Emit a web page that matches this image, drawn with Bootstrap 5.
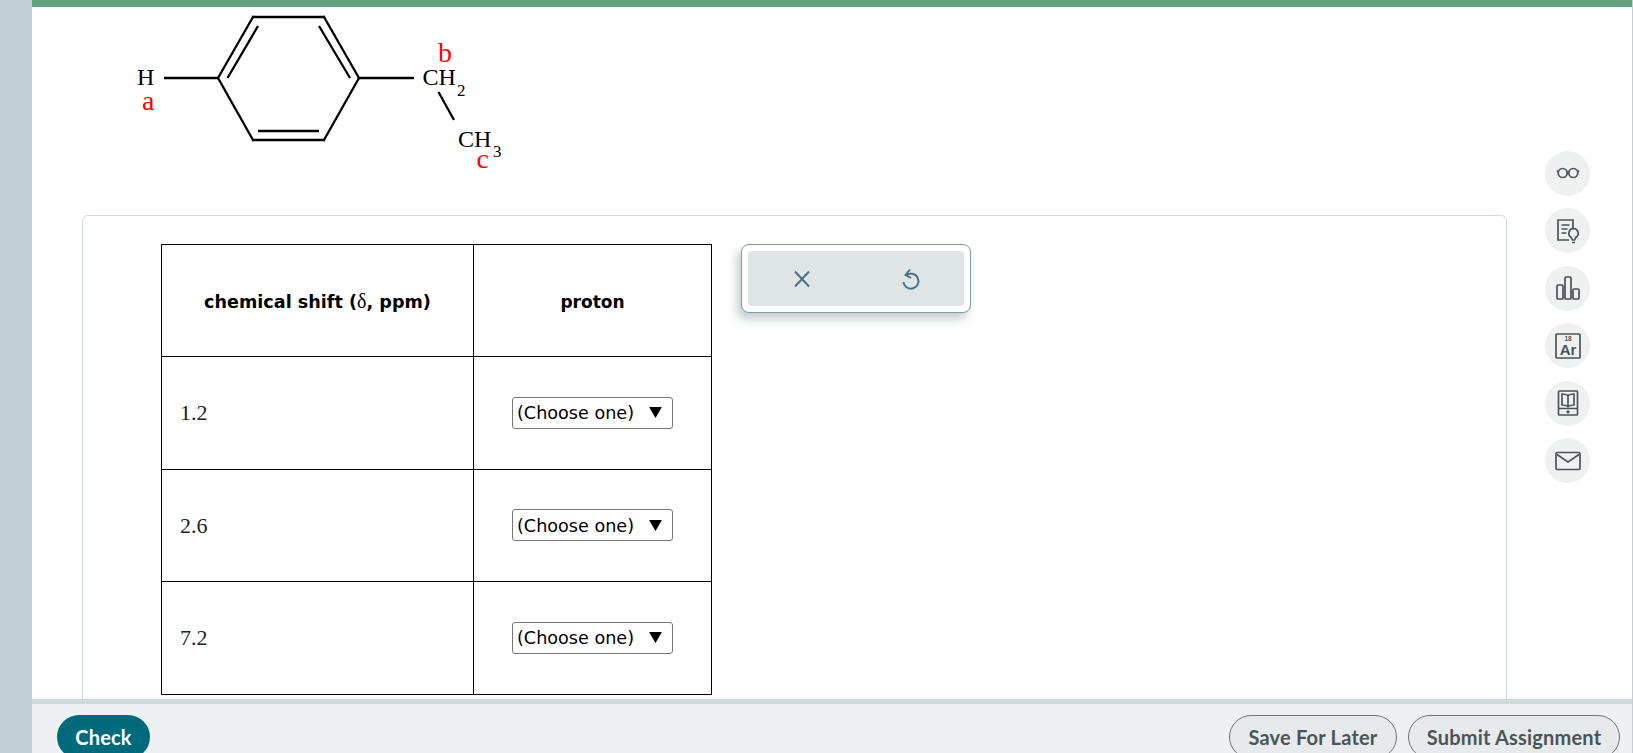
<!DOCTYPE html>
<html lang="en">
<head>
    <meta charset="UTF-8">
    <meta name="viewport" content="width=device-width, initial-scale=1.0">
    <title>Assignment question</title>
    <link href="https://cdn.jsdelivr.net/npm/bootstrap@5.3.0/dist/css/bootstrap.min.css" rel="stylesheet">
    <style>
        body { background: #fff; font-family: "DejaVu Sans", sans-serif; }
        .side-rail { width: 32px; background: #c1ced3; flex-shrink: 0; }
        .main-col { min-width: 0; border-right: 1px solid #c1ced3; }
        .top-strip { height: 7px; background: #5fa27d; flex-shrink: 0; }
        .question-col { width: 1425px; margin-left: 50px; flex-shrink: 0; }
        .molecule { display: block; width: 500px; height: 208px; }
        .molecule text { font-family: "Liberation Serif", serif; font-size: 24px; fill: #000; }
        .molecule .lbl { fill: #f00; font-size: 28px; }
        .molecule .sub { font-size: 17px; }
        .molecule line { stroke: #000; stroke-width: 2.3; stroke-linecap: square; }
        .molecule line.bond { stroke-linecap: butt; }
        .answer-card { min-height: 500px; border: 1px solid #d0dade; border-radius: 6px; padding: 28px 0 0 78px; gap: 29px; }
        .shift-table { width: 551px; margin: 0; --bs-border-color: #000; border-color: #000; flex-shrink: 0; table-layout: fixed; }
        .shift-table th, .shift-table td { height: 112.5px; vertical-align: middle; padding: 0 18px; }
        .shift-table th { height: 112px; padding-top: 2px; font-size: 17.6px; line-height: 24px; font-weight: 700; text-align: center; white-space: nowrap; color: #000; }
        .shift-table th.proton-head { font-size: 17px; }
        .shift-table td.num { font-family: "Liberation Serif", serif; font-size: 22px; color: #222; }
        .delta { font-family: "Liberation Serif", serif; font-weight: 400; font-size: 20px; line-height: 1; }
        .proton-select { width: 161px; height: 32px; padding: 3px 0 0 4px; font-size: 17.6px; line-height: 1; color: #000; border: 1px solid #767676; border-radius: 3px; background-size: 13px 11px; background-position: right 10px center; background-image: url("data:image/svg+xml,%3csvg xmlns='http://www.w3.org/2000/svg' viewBox='0 0 14 12'%3e%3cpath d='M0 0h14L7 12z'/%3e%3c/svg%3e"); }
        .tool-box { width: 230px; height: 69px; padding: 6px; border: 1px solid #7d9ea8; border-radius: 8px; background: #fff; box-shadow: -4px 6px 10px rgba(60, 90, 100, .3); flex-shrink: 0; }
        .tool-inner { background: #dfe5e7; border-radius: 4px; }
        .tool-btn { width: 108px; background: none; border: 0; padding: 0; }
        .tool-btn svg { width: 24px; height: 24px; fill: none; stroke: #46707f; stroke-width: 1.9; }
        .icon-col { margin-left: 38px; padding-top: 143.5px; gap: 12.5px; }
        .round-icon { width: 45px; height: 45px; border-radius: 50%; background: #eff1f1; }
        .round-icon svg { width: 28px; height: 28px; fill: none; stroke: #4a5456; stroke-width: 1.7; }
        .round-icon text { font-family: "Liberation Sans", sans-serif; font-weight: 700; fill: #4a5456; stroke: none; }
        .foot-bar { height: 54px; flex-shrink: 0; background: #eef1f2; border-top: 5px solid #d0dade; padding: 11px 12px 0 25px; overflow: hidden; }
        .foot-right { gap: 11px; }
        .pill { height: 44px; border-radius: 22px; font-family: "Lato", sans-serif; font-weight: 700; font-size: 20px; letter-spacing: .2px; flex-shrink: 0; padding: 0; }
        .pill-check { width: 93px; background: #006a7d; border: 0; color: #fff; }
        .pill-plain { background: #e6eaeb; border: 1px solid #6b7678; color: #4b5557; }
        .pill-save { width: 168px; }
        .pill-submit { width: 212px; }
    </style>
</head>
<body>
    <div class="d-flex vh-100 overflow-hidden">
        <div class="side-rail"></div>
        <div class="main-col d-flex flex-column flex-grow-1">
            <div class="top-strip"></div>
            <div class="d-flex flex-grow-1 overflow-hidden">
                <div class="question-col">
                    <svg class="molecule" viewBox="82 7 500 208">
                        <g>
                            <line x1="218" y1="78" x2="253" y2="17"/>
                            <line x1="253" y1="17" x2="324" y2="17"/>
                            <line x1="324" y1="17" x2="359" y2="78"/>
                            <line x1="359" y1="78" x2="324" y2="140"/>
                            <line x1="324" y1="140" x2="253" y2="140"/>
                            <line x1="253" y1="140" x2="218" y2="78"/>
                            <line class="bond" x1="227.5" y1="78" x2="258" y2="26"/>
                            <line class="bond" x1="319" y1="26" x2="350" y2="78"/>
                            <line class="bond" x1="258" y1="131" x2="319" y2="131"/>
                            <line class="bond" x1="164" y1="78" x2="218" y2="78"/>
                            <line class="bond" x1="359" y1="78" x2="414" y2="78"/>
                            <line class="bond" x1="438.5" y1="92" x2="454" y2="120"/>
                        </g>
                        <text x="137" y="85">H</text>
                        <text class="lbl" x="142" y="110">a</text>
                        <text class="lbl" x="438" y="62">b</text>
                        <text x="422.5" y="85">CH</text>
                        <text class="sub" x="457" y="96">2</text>
                        <text x="458" y="147">CH</text>
                        <text class="sub" x="493" y="157">3</text>
                        <text class="lbl" x="476.5" y="168">c</text>
                    </svg>
                    <div class="answer-card d-flex align-items-start">
                        <table class="table table-bordered shift-table">
                            <colgroup><col style="width: 312px"><col></colgroup>
                            <thead>
                                <tr>
                                    <th>chemical shift (<span class="delta">δ</span>, ppm)</th>
                                    <th class="proton-head">proton</th>
                                </tr>
                            </thead>
                            <tbody>
                                <tr>
                                    <td class="num">1.2</td>
                                    <td class="text-center"><select class="form-select proton-select d-inline-block"><option>(Choose one)</option><option>a</option><option>b</option><option>c</option></select></td>
                                </tr>
                                <tr>
                                    <td class="num">2.6</td>
                                    <td class="text-center"><select class="form-select proton-select d-inline-block"><option>(Choose one)</option><option>a</option><option>b</option><option>c</option></select></td>
                                </tr>
                                <tr>
                                    <td class="num">7.2</td>
                                    <td class="text-center"><select class="form-select proton-select d-inline-block"><option>(Choose one)</option><option>a</option><option>b</option><option>c</option></select></td>
                                </tr>
                            </tbody>
                        </table>
                        <div class="tool-box">
                            <div class="tool-inner d-flex h-100">
                                <button class="tool-btn d-flex align-items-center justify-content-center" aria-label="Clear">
                                    <svg viewBox="0 0 24 24"><path d="M5 4.500 19 19.500M19 4.500 5 19.500"/></svg>
                                </button>
                                <button class="tool-btn d-flex align-items-center justify-content-center" aria-label="Undo">
                                    <svg viewBox="0 0 24 24"><path d="M8 8.500A7.500 7.500 0 1 1 5.500 15M12 2.500 7.500 8l5.500 3"/></svg>
                                </button>
                            </div>
                        </div>
                    </div>
                </div>
                <div class="icon-col d-flex flex-column">
                    <div class="round-icon d-flex align-items-center justify-content-center">
                        <svg viewBox="0 0 28 28"><circle cx="8.700" cy="14" r="4.500"/><circle cx="19.300" cy="14" r="4.500"/><path d="M13 13c.7-.6 1.300-.6 2 0M4.300 13 3 11.500M23.700 13 25 11.500"/></svg>
                    </div>
                    <div class="round-icon d-flex align-items-center justify-content-center">
                        <svg viewBox="0 0 28 28"><path d="M15 23H4V3h15v8M7.500 8h8M7.500 12h6M7.500 16h5"/><path d="M19.500 11.500a4.800 4.800 0 0 1 2.500 8.800L20.500 23h-2L17 20.300a4.800 4.800 0 0 1 2.500-8.800zM18 25.500h3"/></svg>
                    </div>
                    <div class="round-icon d-flex align-items-center justify-content-center">
                        <svg viewBox="0 0 28 28"><rect x="3" y="11" width="6" height="14" rx="1"/><rect x="11" y="3" width="6" height="22" rx="1"/><rect x="19" y="15" width="6" height="10" rx="1"/></svg>
                    </div>
                    <div class="round-icon d-flex align-items-center justify-content-center">
                        <svg viewBox="0 0 28 28"><rect x="2" y="2" width="24" height="24" rx="1"/><text x="14" y="9" font-size="6.500" text-anchor="middle">18</text><text x="14" y="22.500" font-size="15" text-anchor="middle">Ar</text></svg>
                    </div>
                    <div class="round-icon d-flex align-items-center justify-content-center">
                        <svg viewBox="0 0 28 28"><rect x="4.500" y="2" width="19" height="24" rx="1"/><path d="M4.500 19.500h19M14 6.500c-2-1.200-4-1.500-6-1.500v11c2 0 4 .3 6 1.500 2-1.200 4-1.500 6-1.500V5c-2 0-4 .3-6 1.500zM14 6.500v11"/><circle cx="14" cy="22.800" r=".8"/></svg>
                    </div>
                    <div class="round-icon d-flex align-items-center justify-content-center">
                        <svg viewBox="0 0 28 28"><rect x="2" y="5.500" width="24" height="17" rx="1.500"/><path d="M3 7.500l11 7.500 11-7.500"/></svg>
                    </div>
                </div>
            </div>
            <div class="foot-bar d-flex justify-content-between">
                <button class="pill pill-check">Check</button>
                <div class="foot-right d-flex">
                    <button class="pill pill-plain pill-save">Save For Later</button>
                    <button class="pill pill-plain pill-submit">Submit Assignment</button>
                </div>
            </div>
        </div>
    </div>
    <script src="https://cdn.jsdelivr.net/npm/bootstrap@5.3.0/dist/js/bootstrap.bundle.min.js"></script>
</body>
</html>
